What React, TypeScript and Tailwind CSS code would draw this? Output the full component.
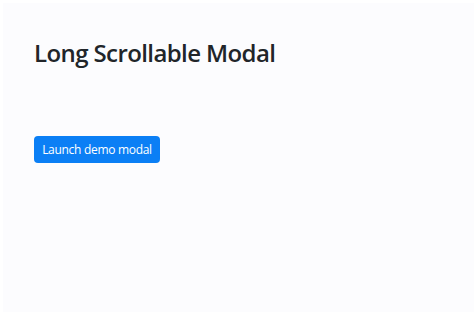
export default function App() {
  return (
    <div className="w-[474px] h-[314px] bg-white overflow-hidden">
      <div
        className="ml-[3px] mt-[3px] h-[309px] bg-[#fcfcfe] pl-[31px] pt-[33px]"
        style={{ fontFamily: '"Open Sans", "Noto Sans", sans-serif' }}
      >
        <h3 className="text-[24px] leading-[34px] font-semibold text-[#212529] tracking-[-0.6px]">
          Long Scrollable Modal
        </h3>
        <button
          type="button"
          className="mt-[66px] h-[27px] w-[126px] rounded-[4px] bg-[#0b7ff5] text-white text-[12px] leading-[17px] tracking-[-0.3px]"
        >
          Launch demo modal
        </button>
      </div>
    </div>
  );
}
